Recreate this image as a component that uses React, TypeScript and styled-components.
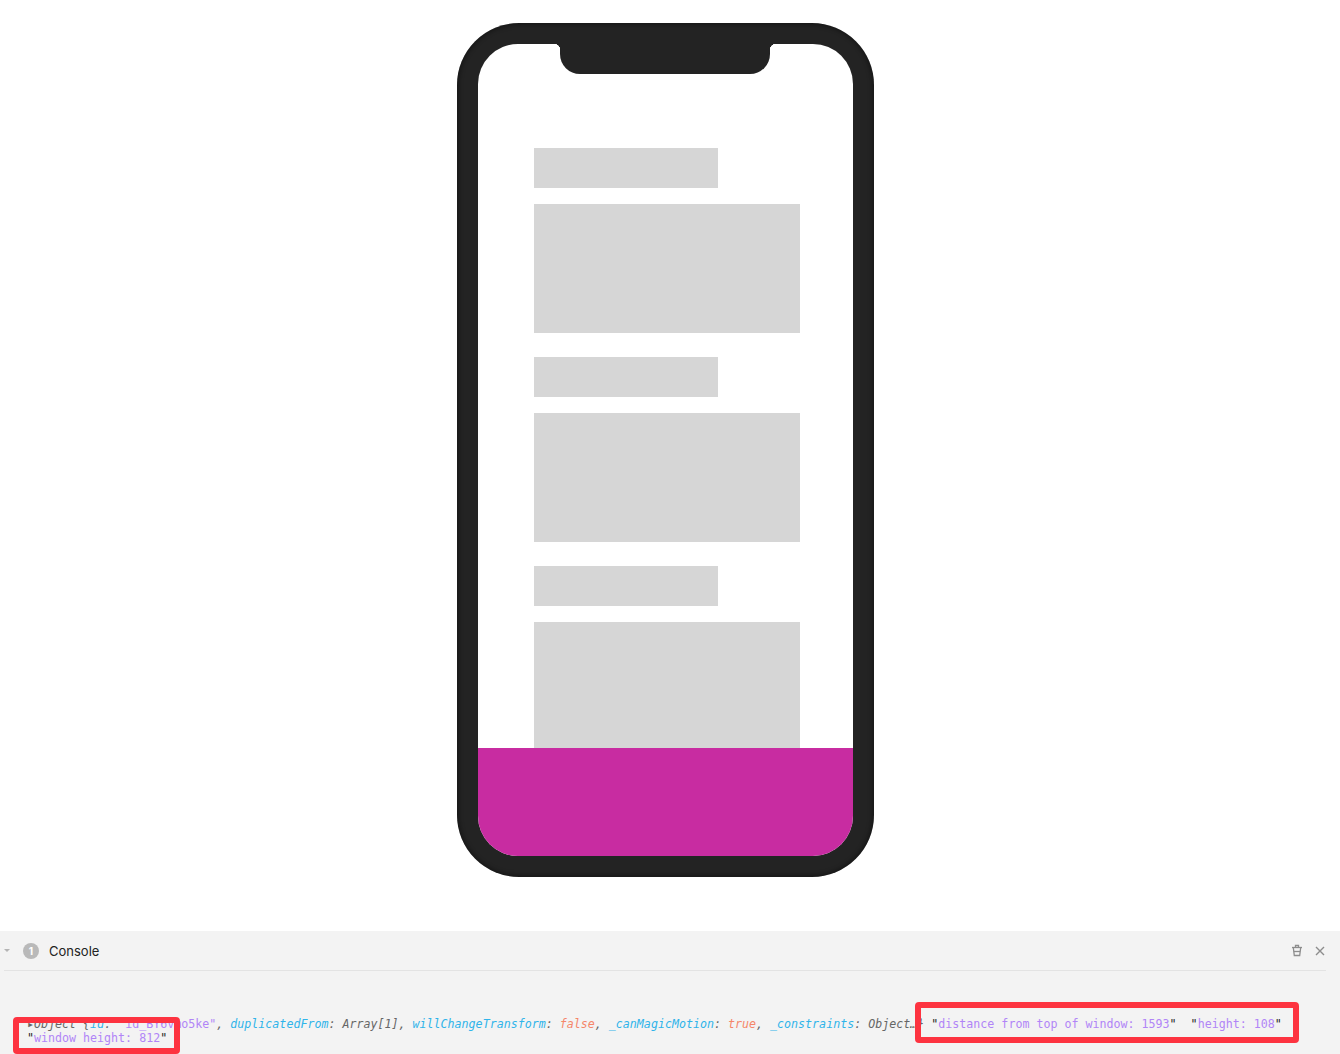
import React from 'react';
import styled, { createGlobalStyle } from 'styled-components';

const GlobalStyle = createGlobalStyle`
  html, body {
    margin: 0;
    padding: 0;
    background: #ffffff;
  }
  body {
    font-family: Inter, "Noto Sans", sans-serif;
  }
`;

const Page = styled.div`
  width: 1340px;
  height: 1054px;
  display: flex;
  flex-direction: column;
  overflow: hidden;
`;

const Stage = styled.div`
  height: 931px;
  flex-shrink: 0;
  display: flex;
  justify-content: center;
  align-items: flex-start;
  padding: 23px 9px 0 0;
  box-sizing: border-box;
`;

const Phone = styled.div`
  width: 417px;
  height: 854px;
  box-sizing: border-box;
  padding: 21px;
  border-radius: 62px;
  background: #232323;
  box-shadow: inset 0 0 4px 2px rgba(0, 0, 0, 0.35);
`;

const Screen = styled.div`
  position: relative;
  width: 375px;
  height: 812px;
  border-radius: 40px;
  overflow: hidden;
  background: #ffffff;
  display: flex;
  flex-direction: column;
`;

const Notch = styled.div`
  position: absolute;
  top: 0;
  left: 82px;
  width: 210px;
  height: 30px;
  background: #232323;
  border-radius: 0 0 20px 20px;

  &::before,
  &::after {
    content: '';
    position: absolute;
    top: 0;
    width: 6px;
    height: 6px;
  }
  &::before {
    left: -6px;
    background: radial-gradient(circle at 0 100%, transparent 6px, #232323 6.5px);
  }
  &::after {
    right: -6px;
    background: radial-gradient(circle at 100% 100%, transparent 6px, #232323 6.5px);
  }
`;

const Content = styled.div`
  flex: 1;
  overflow: hidden;
  padding: 104px 0 0 56px;
  display: flex;
  flex-direction: column;
`;

const Section = styled.div`
  display: flex;
  flex-direction: column;
  gap: 16px;
  margin-bottom: 24px;
  flex-shrink: 0;
`;

const Block = styled.div<{ $w: number; $h: number }>`
  width: ${({ $w }) => $w}px;
  height: ${({ $h }) => $h}px;
  background: #d6d6d6;
  flex-shrink: 0;
`;

const BottomBar = styled.div`
  height: 108px;
  flex-shrink: 0;
  background: #c82ca1;
`;

const Console = styled.div`
  position: relative;
  flex: 1;
  background: #f3f3f3;
`;

const ConsoleHeader = styled.div`
  height: 39px;
  display: flex;
  align-items: center;
  padding: 0 15px 0 4px;
`;

const Caret = styled.span`
  width: 0;
  height: 0;
  border-left: 3px solid transparent;
  border-right: 3px solid transparent;
  border-top: 3px solid #b4b4b4;
  margin-right: 13px;
`;

const Badge = styled.span`
  width: 16px;
  height: 16px;
  border-radius: 50%;
  background: #b9b9b9;
  color: #ffffff;
  font-size: 10px;
  font-weight: 700;
  display: flex;
  align-items: center;
  justify-content: center;
  margin-right: 10px;
`;

const Title = styled.span`
  font-size: 13px;
  color: #222222;
  flex: 1;
`;

const HeaderIcons = styled.div`
  display: flex;
  align-items: center;
  gap: 12px;
  color: #8d8d8d;
`;

const Divider = styled.div`
  height: 1px;
  margin: 0 14px 0 4px;
  background: #e3e3e3;
`;

const Log = styled.div`
  padding: 46px 0 0 27px;
  font-family: "DejaVu Sans Mono", "Liberation Mono", monospace;
  font-size: 11.65px;
  line-height: 14px;
  white-space: pre;
  color: #333333;
`;

const Line = styled.div``;

const Tok = styled.span<{ $kind: 'key' | 'dim' | 'bool' | 'str' | 'plain' }>`
  font-style: ${({ $kind }) => ($kind === 'str' || $kind === 'plain' ? 'normal' : 'italic')};
  color: ${({ $kind }) =>
    $kind === 'key'
      ? '#2fb4ea'
      : $kind === 'dim'
      ? '#666666'
      : $kind === 'bool'
      ? '#f5866a'
      : $kind === 'str'
      ? '#b185f7'
      : '#222222'};
`;

const Highlight = styled.div<{ $x: number; $y: number; $w: number; $h: number }>`
  position: absolute;
  left: ${({ $x }) => $x}px;
  top: ${({ $y }) => $y}px;
  width: ${({ $w }) => $w}px;
  height: ${({ $h }) => $h}px;
  box-sizing: border-box;
  border: 6px solid #fd3340;
  border-radius: 4px;
`;

const TrashIcon = () => (
  <svg width="12" height="13" viewBox="0 0 12 13" fill="none" stroke="currentColor" strokeWidth="1.3">
    <path d="M4.5 3V1.5h3V3" />
    <path d="M1 3.5h10" />
    <path d="M2.3 3.5l1 8h5.4l1-8" />
    <path d="M2.8 7.5h6.4" />
  </svg>
);

const CloseIcon = () => (
  <svg width="10" height="10" viewBox="0 0 10 10" stroke="currentColor" strokeWidth="1.4">
    <path d="M1 1l8 8M9 1l-8 8" />
  </svg>
);

const sections = [0, 1, 2];

export default function App() {
  return (
    <>
      <GlobalStyle />
      <Page>
        <Stage>
          <Phone>
            <Screen>
              <Notch />
              <Content>
                {sections.map((s) => (
                  <Section key={s}>
                    <Block $w={184} $h={40} />
                    <Block $w={266} $h={129} />
                  </Section>
                ))}
              </Content>
              <BottomBar />
            </Screen>
          </Phone>
        </Stage>
        <Console>
          <ConsoleHeader>
            <Caret />
            <Badge>1</Badge>
            <Title>Console</Title>
            <HeaderIcons>
              <TrashIcon />
              <CloseIcon />
            </HeaderIcons>
          </ConsoleHeader>
          <Divider />
          <Log>
            <Line>
              <Tok $kind="dim">▸Object {'{'}</Tok>
              <Tok $kind="key">id</Tok>
              <Tok $kind="dim">: </Tok>
              <Tok $kind="str">"id_BY6vmo5ke"</Tok>
              <Tok $kind="dim">, </Tok>
              <Tok $kind="key">duplicatedFrom</Tok>
              <Tok $kind="dim">: Array[1], </Tok>
              <Tok $kind="key">willChangeTransform</Tok>
              <Tok $kind="dim">: </Tok>
              <Tok $kind="bool">false</Tok>
              <Tok $kind="dim">, </Tok>
              <Tok $kind="key">_canMagicMotion</Tok>
              <Tok $kind="dim">: </Tok>
              <Tok $kind="bool">true</Tok>
              <Tok $kind="dim">, </Tok>
              <Tok $kind="key">_constraints</Tok>
              <Tok $kind="dim">: Object…{'}'}</Tok>
              <Tok $kind="plain"> "</Tok>
              <Tok $kind="str">distance from top of window: 1593</Tok>
              <Tok $kind="plain">"  "</Tok>
              <Tok $kind="str">height: 108</Tok>
              <Tok $kind="plain">"</Tok>
            </Line>
            <Line>
              <Tok $kind="plain">"</Tok>
              <Tok $kind="str">window height: 812</Tok>
              <Tok $kind="plain">"</Tok>
            </Line>
          </Log>
          <Highlight $x={13} $y={86} $w={167} $h={37} />
          <Highlight $x={915} $y={71} $w={384} $h={41} />
        </Console>
      </Page>
    </>
  );
}
